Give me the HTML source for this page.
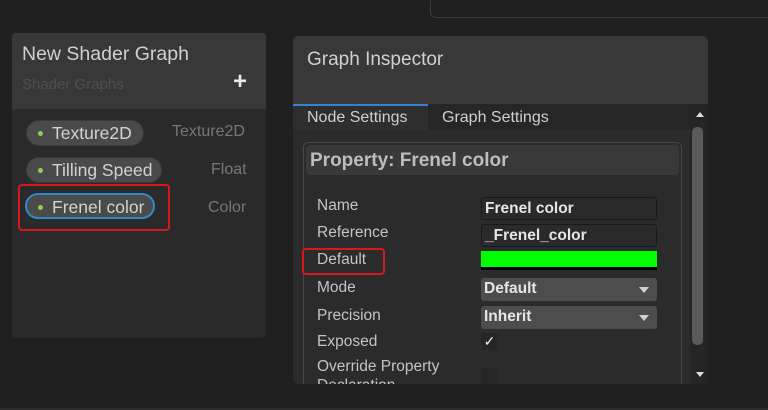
<!DOCTYPE html>
<html><head><style>
body{margin:0;width:768px;height:410px;background:#202020;font-family:"Liberation Sans",sans-serif;position:relative;overflow:hidden}
div{position:absolute;box-sizing:border-box}
.t{white-space:nowrap}
.pill{background:#4a4a4a;border-radius:13px;height:26px;color:#d2d2d2;font-size:17.5px;line-height:25px;padding-left:25px;border:1px solid #3a3a3a}
.pill:before{content:"";position:absolute;left:11px;top:10px;width:5px;height:5px;border-radius:50%;background:#8fd14f}
.lbl{color:#c4c4c4;font-size:15.5px;left:317px}
.fld{left:481px;width:176px;height:23px;background:#2a2a2a;border:1px solid #1a1a1a;border-radius:3px;color:#e6e6e6;font-weight:bold;font-size:15.5px;line-height:21px;padding-left:3px}
.dd{background:#4d4d4d;border:none}
.dd:after{content:"";position:absolute;right:8px;top:9px;border-left:5px solid transparent;border-right:5px solid transparent;border-top:6px solid #cfcfcf}
</style></head><body>
<div style="left:430px;top:-10px;width:350px;height:28px;border:1px solid #3a3a3a;border-radius:6px"></div>
<!-- left panel -->
<div style="left:12px;top:33px;width:254px;height:305px;background:#2a2a2a;border-radius:4px;overflow:hidden">
 <div style="left:0;top:0;width:254px;height:76px;background:#383838"></div>
 <div class="t" style="left:10px;top:10px;color:#d0d0d0;font-size:19.5px">New Shader Graph</div>
 <div class="t" style="left:10px;top:43px;color:#4e4e4e;font-size:15px">Shader Graphs</div>
 <div class="t" style="left:221px;top:35px;color:#e8e8e8;font-size:24px;font-weight:bold">+</div>
 <div class="pill t" style="left:14px;top:87px;width:118px">Texture2D</div>
 <div class="t" style="left:160px;top:90px;color:#777;font-size:16px">Texture2D</div>
 <div class="pill t" style="left:14px;top:124px;width:136px">Tilling Speed</div>
 <div class="t" style="left:199px;top:128px;color:#777;font-size:16px">Float</div>
 <div class="pill t" style="left:13px;top:160px;width:130px;border:2px solid #2e8bc6">Frenel color</div>
 <div class="t" style="left:196px;top:166px;color:#777;font-size:16px">Color</div>
</div>
<div style="left:18px;top:184px;width:152px;height:47px;border:2px solid #d8181c;border-radius:4px"></div>
<!-- right panel -->
<div style="left:293px;top:36px;width:415px;height:348px;background:#2b2b2b;border-radius:5px;overflow:hidden">
 <div style="left:0;top:0;width:415px;height:68px;background:#383838"></div>
 <div class="t" style="left:14px;top:13px;color:#d0d0d0;font-size:19px">Graph Inspector</div>
 <div style="left:0;top:68px;width:397px;height:26px;background:#262626"></div>
 <div style="left:0;top:68px;width:135px;height:26px;background:#2e2e2e;border-top:2px solid #3a7fd0"></div>
 <div class="t" style="left:14px;top:73px;color:#cfcfcf;font-size:16px">Node Settings</div>
 <div class="t" style="left:149px;top:73px;color:#cfcfcf;font-size:16px">Graph Settings</div>
 <div style="left:397px;top:68px;width:18px;height:280px;background:#252525"></div>
 <div style="left:403px;top:76px;border-left:4px solid transparent;border-right:4px solid transparent;border-bottom:5px solid #ddd"></div>
 <div style="left:399px;top:91px;width:11px;height:218px;background:#5a5a5a;border-radius:5px"></div>
 <div style="left:403px;top:336px;border-left:4px solid transparent;border-right:4px solid transparent;border-top:5px solid #ddd"></div>
 <div style="left:10px;top:106px;width:379px;height:260px;border:1px solid #474747;border-radius:5px"></div>
 <div style="left:13px;top:109px;width:373px;height:30px;background:#393939;border-radius:4px"></div>
 <div class="t" style="left:17px;top:114px;color:#bdbdbd;font-size:19px;font-weight:bold">Property: Frenel color</div>
</div>
<div class="lbl t" style="top:197px">Name</div>
<div class="fld t" style="top:197px">Frenel color</div>
<div class="lbl t" style="top:224px">Reference</div>
<div class="fld t" style="top:224px">_Frenel_color</div>
<div class="lbl t" style="top:251px">Default</div>
<div style="left:481px;top:251px;width:176px;height:19px;background:#00ff00;border-bottom:3px solid #000"></div>
<div style="left:302px;top:248px;width:83px;height:27px;border:2px solid #d8181c;border-radius:4px"></div>
<div class="lbl t" style="top:279px">Mode</div>
<div class="fld dd t" style="top:278px">Default</div>
<div class="lbl t" style="top:307px">Precision</div>
<div class="fld dd t" style="top:306px">Inherit</div>
<div class="lbl t" style="top:333px">Exposed</div>
<div style="left:481px;top:333px;width:17px;height:17px;background:#262626;border-radius:2px;color:#eee;font-size:14px;line-height:17px;text-align:center">✓</div>
<div class="lbl t" style="top:358px">Override Property</div>
<div style="left:481px;top:368px;width:17px;height:16px;background:#262626;border-radius:2px"></div>
<div style="left:293px;top:377px;width:400px;height:7px;overflow:hidden"><div class="lbl t" style="left:24px;top:0;color:#c4c4c4">Declaration</div></div>
<div style="left:0;top:408px;width:768px;height:2px;background:#2c2c2c"></div>
</body></html>
